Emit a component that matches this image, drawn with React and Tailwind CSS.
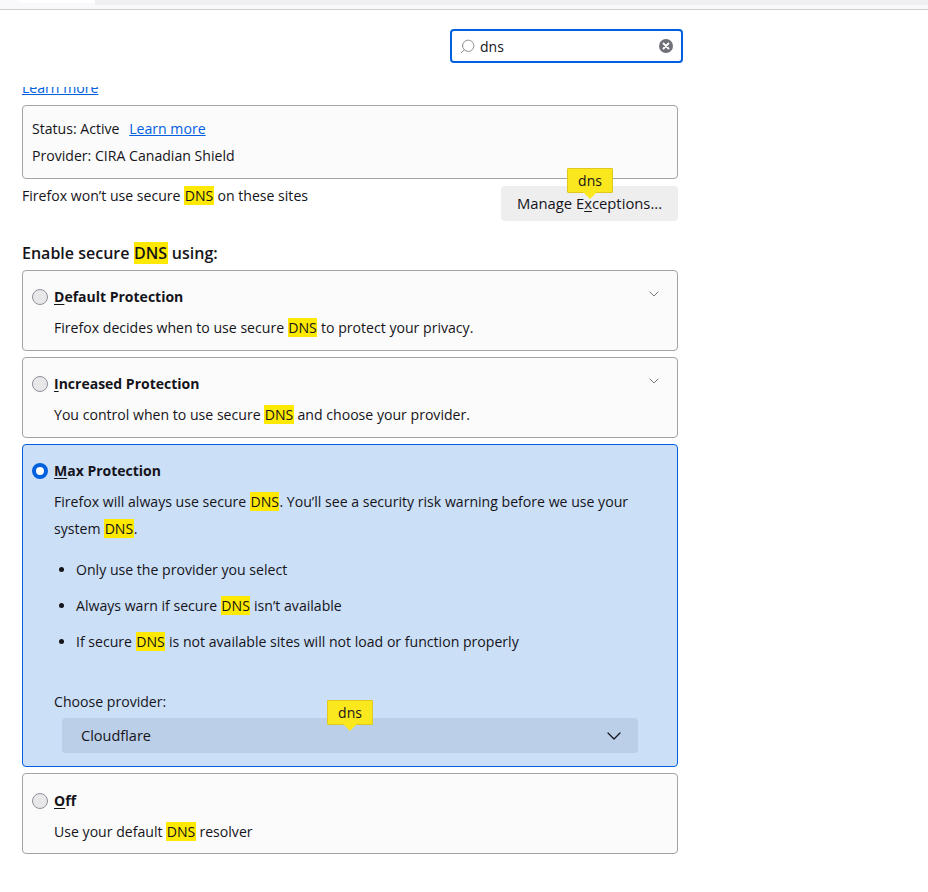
import React from 'react';
import { ChevronDown, Search } from 'lucide-react';

const Dns = () => <mark className="bg-[#ffe900] px-[0.5px] text-inherit">DNS</mark>;

const Key = ({ children }) => <span className="underline underline-offset-2">{children}</span>;

const Tip = ({ className }) => (
    <div className={`absolute z-10 h-[25px] w-[46px] rounded-[1px] border border-[#e0c91c] bg-[#fbe71e] text-center text-[14px] leading-[24px] text-[#15141a] ${className}`}>
        dns
        <div className="absolute left-[15px] top-[23px] h-0 w-0 border-x-[7px] border-t-[7px] border-x-transparent border-t-[#fbe71e]" />
    </div>
);

const Radio = ({ checked }) => (
    checked
        ? <div className="h-4 w-4 shrink-0 rounded-full border-[4px] border-[#0060df] bg-white" />
        : <div className="h-4 w-4 shrink-0 rounded-full border border-[#8f8f9d] bg-[#e8e8ea]" />
);

const OptionCard = ({ k, rest, chevron, className = 'pt-[16px]', children }) => (
    <div className={`relative h-[81px] rounded border border-[#a3a3a8] bg-[#fbfbfb] pl-[9px] ${className}`}>
        <div className="flex h-5 items-center gap-[6px]">
            <Radio />
            <span className="text-[14px] font-bold leading-5"><Key>{k}</Key>{rest}</span>
        </div>
        {chevron && <ChevronDown className="absolute right-[15px] top-[15px] h-4 w-4 text-[#5b5b66]" strokeWidth={1.25} />}
        <p className="ml-[22px] mt-[11px] leading-5">{children}</p>
    </div>
);

export default function App() {
    return (
        <div className="min-h-[892px] bg-white font-['Open_Sans',sans-serif] text-[14.1px] text-[#15141a]">
            <div className="h-[10px] border-b border-[#d0d0d4] bg-[#f9f9fb]">
                <div className="flex h-[5px]">
                    <div className="w-[19px] bg-[#f9f9fb]" />
                    <div className="h-[3px] w-[76px] rounded-b bg-white" />
                    <div className="flex-1 bg-[#f0f0f4]" />
                </div>
            </div>

            <div className="w-[683px] pl-[22px]">
                <div className="flex justify-end pt-[19px]">
                    <div className="flex h-[34px] w-[233px] items-center rounded border-2 border-[#0060df] pl-[7px] pr-[8px]">
                        <Search className="h-[17px] w-[17px] -scale-x-100 text-[#808088]" strokeWidth={1.25} />
                        <span className="ml-[4px] flex-1 pt-px text-[14px]">dns</span>
                        <svg className="h-[14px] w-[14px]" viewBox="0 0 14 14">
                            <circle cx="7" cy="7" r="7" fill="#707078" />
                            <path d="M4.5 4.5l5 5M9.5 4.5l-5 5" stroke="#fff" strokeWidth="1.8" strokeLinecap="round" />
                        </svg>
                    </div>
                </div>

                <div className="mt-[24px] h-[10px] w-[656px] overflow-hidden">
                    <a className="-mt-[9px] block leading-5 text-[#0060df] underline">Learn more</a>
                </div>

                <div className="mt-[8px] h-[74px] w-[656px] rounded border border-[#a3a3a8] bg-[#fbfbfb] pl-[9px] pt-[13px]">
                    <p className="leading-5">Status: Active <a className="ml-[6px] text-[#0060df] underline">Learn more</a></p>
                    <p className="mt-[7px] leading-5">Provider: CIRA Canadian Shield</p>
                </div>

                <div className="relative mt-[7px] flex w-[656px] items-start justify-between">
                    <p className="leading-5">Firefox won’t use secure <Dns /> on these sites</p>
                    <button className="h-[35px] w-[177px] rounded bg-[#eeeeef] text-[14.8px] font-medium">Manage E<Key>x</Key>ceptions...</button>
                    <Tip className="left-[545px] top-[-18px]" />
                </div>

                <h2 className="mt-[20px] text-[16px] font-semibold leading-6">Enable secure <Dns /> using:</h2>

                <div className="mt-[5px] flex w-[656px] flex-col gap-[6px]">
                    <OptionCard k="D" rest="efault Protection" chevron>Firefox decides when to use secure <Dns /> to protect your privacy.</OptionCard>
                    <OptionCard k="I" rest="ncreased Protection" chevron>You control when to use secure <Dns /> and choose your provider.</OptionCard>

                    <div className="relative h-[323px] rounded border border-[#0060df] bg-[#cbdff7] pl-[9px] pt-[16px]">
                        <div className="flex h-5 items-center gap-[6px]">
                            <Radio checked />
                            <span className="text-[14px] font-bold leading-5"><Key>M</Key>ax Protection</span>
                        </div>
                        <p className="ml-[22px] mt-[7px] w-[600px] leading-[27px]">Firefox will always use secure <Dns />. You’ll see a security risk warning before we use your system <Dns />.</p>
                        <ul className="ml-[44px] mt-[18px] flex list-disc flex-col gap-[16px] pl-0 leading-5 marker:text-[#15141a]">
                            <li>Only use the provider you select</li>
                            <li>Always warn if secure <Dns /> isn’t available</li>
                            <li>If secure <Dns /> is not available sites will not load or function properly</li>
                        </ul>
                        <p className="ml-[22px] mt-[40px] leading-5">Choose provider:</p>
                        <div className="ml-[30px] mt-[6px] flex h-[35px] w-[576px] items-center justify-between rounded bg-[#bccfe8] pl-[19px] pr-[12px] text-[14.5px] font-medium">
                            <span className="pt-px">Cloudflare</span>
                            <ChevronDown className="h-6 w-6" strokeWidth={1.25} />
                        </div>
                        <Tip className="left-[304px] top-[255px]" />
                    </div>

                    <OptionCard k="O" rest="ff" className="pt-[17px]">Use your default <Dns /> resolver</OptionCard>
                </div>
            </div>
        </div>
    );
}
